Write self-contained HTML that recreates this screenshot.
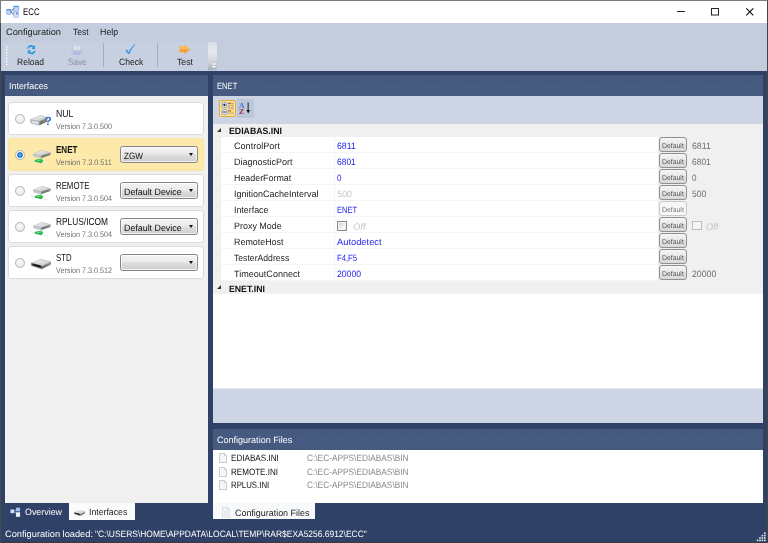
<!DOCTYPE html>
<html>
<head>
<meta charset="utf-8">
<title>ECC</title>
<style>
html,body{margin:0;padding:0;}
body{width:768px;height:543px;overflow:hidden;background:#2f4166;font-family:"Liberation Sans",sans-serif;font-size:9.3px;color:#1a1a1a;position:relative;text-rendering:geometricPrecision;}
.a{position:absolute;white-space:pre;line-height:12px;}
.t{position:absolute;white-space:pre;line-height:12px;height:12px;transform-origin:0 50%;font-size:9.2px;filter:blur(.35px);}
svg.a{filter:blur(.3px);}
#title{left:0;top:0;width:768px;height:23px;background:#fff;}
#menu{left:0;top:23px;width:768px;height:47.6px;background:#c3cddd;}
#tb{left:3px;top:42px;width:206px;height:28.6px;background:#c7d0e0;}
.sep{position:absolute;top:43px;width:1px;height:24px;background:#a4afc4;}
.hdr{position:absolute;height:21px;background-color:#465a80;color:#fff;}
.hdr:after{content:"";position:absolute;left:46px;right:4px;top:9px;height:10px;
 background-image:radial-gradient(circle at 1px 1px,rgba(150,170,205,.13) 0.5px,transparent 0.9px),radial-gradient(circle at 3.5px 3.5px,rgba(150,170,205,.13) 0.5px,transparent 0.9px);background-size:5px 5px;}
.hdr.h2:after{left:28px}.hdr.h3:after{left:83px}
.card{position:absolute;left:8px;width:196.3px;height:33.2px;background:#fff;border:1px solid #dcdcdc;border-radius:3px;box-sizing:border-box;}
.card.sel{background:#fde9a9;border-color:#fbe3a0;}
.radio{position:absolute;left:15.1px;width:7.6px;height:7.6px;border-radius:50%;border:1px solid #b4b4b4;background:radial-gradient(circle at 45% 40%,#fdfdfd 0,#dedede 100%);box-sizing:content-box;}
.nm{font-size:10.2px;color:#111;}
.ver{font-size:8px;color:#6e6e6e;}
.combo{position:absolute;left:120px;width:78px;height:17px;box-sizing:border-box;border:1px solid #858585;border-radius:2.5px;background:linear-gradient(#f4f4f4 0,#ebebeb 45%,#dcdcdc 55%,#cfcfcf 100%);box-shadow:inset 0 0 0 1px rgba(255,255,255,.7);}
.combo .t{left:2.6px;color:#111;}
.combo i{position:absolute;right:3.6px;top:6.1px;width:0;height:0;border-left:2.7px solid transparent;border-right:2.7px solid transparent;border-top:3.6px solid #111;}
.row{position:absolute;left:221px;width:437px;height:15px;background:#fff;}
.row .n{left:13px;color:#222;}
.row .v{left:115.5px;color:#1c1cf0;}
.row b{position:absolute;left:113px;top:0;width:1px;height:15px;background:#f3f3f3;}
.def{position:absolute;left:659.4px;width:27.2px;height:14.5px;box-sizing:border-box;border:1px solid #8f8f8f;border-radius:3px;background:linear-gradient(#f5f5f5,#d9d9d9);}
.def .t{left:1.8px;font-size:6.9px;color:#555;}
.def.dis{border-color:#c8c8c8;background:#f7f7f7;}
.def.dis .t{color:#777;}
.dv{left:692px;color:#6a6a6a;}
.cat{left:229px;font-weight:bold;color:#111;}
.tri{position:absolute;width:0;height:0;border-left:4px solid transparent;border-bottom:4px solid #333;}
.fi{position:absolute;left:219px;width:8px;height:10px;}
.fn{left:230.8px;color:#111;}
.fp{left:306.5px;color:#8a8a8a;}
</style>
</head>
<body>
<!-- title bar -->
<div class="a" id="title"></div>
<svg class="a" style="left:6px;top:5px" width="14" height="13" viewBox="0 0 14 13">
 <rect x=".8" y="4.4" width="4" height="4.8" fill="#bdd5f5" stroke="#5f98ea" stroke-width=".6"/>
 <rect x=".8" y="4.1" width="4" height="1.2" fill="#4f8fe8"/>
 <rect x="7.8" y="1.2" width="4.6" height="5.2" fill="#c3d8f6" stroke="#5f98ea" stroke-width=".6"/>
 <rect x="7.8" y=".9" width="4.6" height="1.2" fill="#4f8fe8"/>
 <rect x="7.8" y="6.8" width="4.6" height="5.4" fill="#d3e2f7" stroke="#93b6ee" stroke-width=".6"/>
 <rect x="10.2" y="7.6" width="1.6" height="1.8" fill="#5c6df0"/>
 <path d="M4.9 6.7L7.9 3.4M4.9 6.7L7.9 9.4" stroke="#46566e" stroke-width="1" fill="none"/>
</svg>
<div class="t" style="transform:scaleX(0.827);top:7.00px;left:22.7px;font-size:9.5px;color:#000;">ECC</div>
<svg class="a" style="left:670px;top:2px" width="96" height="20" viewBox="0 0 96 20">
 <path d="M7 9.5h8" stroke="#222" stroke-width="1"/>
 <rect x="41.5" y="6.5" width="7" height="6.5" fill="none" stroke="#222" stroke-width="1"/>
 <path d="M76.3 6.3l7 7M83.3 6.3l-7 7" stroke="#111" stroke-width="1.15"/>
</svg>

<!-- menu + toolbar -->
<div class="a" id="menu"></div>
<div class="t" style="transform:scaleX(1.006);top:26.00px;left:6px;">Configuration</div>
<div class="t" style="transform:scaleX(0.925);top:26.00px;left:72.7px;">Test</div>
<div class="t" style="transform:scaleX(0.968);top:26.00px;left:100px;">Help</div>
<div class="a" id="tb"></div>
<svg class="a" style="left:5px;top:45px" width="4" height="22" viewBox="0 0 4 22">
 <g fill="#fff"><rect x="1" y="1" width="1.4" height="1.4"/><rect x="1" y="4" width="1.4" height="1.4"/><rect x="1" y="7" width="1.4" height="1.4"/><rect x="1" y="10" width="1.4" height="1.4"/><rect x="1" y="13" width="1.4" height="1.4"/><rect x="1" y="16" width="1.4" height="1.4"/><rect x="1" y="19" width="1.4" height="1.4"/></g>
</svg>
<!-- reload icon -->
<svg class="a" style="left:25.8px;top:42.9px" width="10.8" height="13.2" viewBox="0 0 11 11" preserveAspectRatio="none">
 <path d="M1.2 4.6C1.8 2.4 3.6 1.4 5.6 1.6 6.6 1.7 7.4 2.1 8 2.7L9.2 1.6V5H5.8L7 3.8C6.2 3.1 4.6 2.8 3.6 3.6 3.2 3.9 3 4.2 2.8 4.6Z" fill="#2a96e4"/>
 <path d="M9.8 6.4C9.2 8.6 7.4 9.6 5.4 9.4 4.4 9.3 3.6 8.9 3 8.3L1.8 9.4V6H5.2L4 7.2C4.8 7.9 6.4 8.2 7.4 7.4 7.8 7.1 8 6.8 8.2 6.4Z" fill="#2a96e4"/>
</svg>
<div class="t" style="transform:scaleX(0.927);top:56.00px;left:17.3px;">Reload</div>
<!-- save icon (disabled) -->
<svg class="a" style="left:70.6px;top:44.6px" width="12" height="11" viewBox="0 0 12 11">
 <rect x=".6" y=".6" width="10.6" height="9.4" fill="#bcc3d9" opacity=".75"/>
 <rect x="2.2" y=".6" width="7.4" height="4.4" fill="#d9deea"/>
 <rect x="2.4" y="6" width="7" height="4" fill="#c6cbe2"/>
 <path d="M3.4 6.4v3.4M5.2 6.4v3.4M7 6.4v3.4M8.8 6.4v3.4" stroke="#9b9bd2" stroke-width=".7"/>
</svg>
<div class="t" style="transform:scaleX(0.892);top:56.00px;left:67.8px;color:#8b8f99;">Save</div>
<div class="sep" style="left:103px"></div>
<!-- check icon -->
<svg class="a" style="left:124px;top:43px" width="12" height="12" viewBox="0 0 12 12">
 <path d="M1.2 7.4L2.8 6.6L4.7 8.9C6.2 5.8 8.2 3.2 11 0.9L11.5 1.4C9 4 7 7.2 5.3 11H4.2Z" fill="#3a98e8"/>
</svg>
<div class="t" style="transform:scaleX(0.933);top:56.00px;left:119px;">Check</div>
<div class="sep" style="left:157px"></div>
<!-- test icon (arrow) -->
<svg class="a" style="left:178px;top:44px" width="13" height="11" viewBox="0 0 13 11">
 <path d="M.8 2.6L2.4 2.2H6.6V.4L12 5.2L6.6 10.2V8.2H2.4L.8 7.8L2 5.2Z" fill="#f3a03c"/>
 <path d="M.8 2.6L2.4 2.2H6.6V.4L12 5.2H2Z" fill="#f9bb62"/>
</svg>
<div class="t" style="transform:scaleX(0.949);top:56.00px;left:176.7px;">Test</div>
<!-- overflow -->
<div class="a" style="left:208.3px;top:41.5px;width:8.4px;height:28.3px;border-radius:0 3px 3px 0;background:linear-gradient(#d9dfe8,#e6e8ed 35%,#d0d3da 70%,#a9aebb);"></div>
<svg class="a" style="left:211px;top:63px" width="6" height="6" viewBox="0 0 6 6"><path d="M1 1h4" stroke="#fff" stroke-width="1"/><path d="M1 3h4L3 5Z" fill="#fff"/></svg>

<!-- left panel -->
<div class="hdr" style="left:5px;top:75px;width:203px;"></div>

<div class="t" style="transform:scaleX(0.967);top:80.00px;left:9.3px;color:#fff;">Interfaces</div>
<div class="a" style="left:5px;top:96px;width:203px;height:407px;background:#f0f0f0"></div>

<!-- cards -->
<div class="card" style="top:102.3px"></div>
<div class="card sel" style="top:138.3px"></div>
<div class="card" style="top:174.3px"></div>
<div class="card" style="top:210.3px"></div>
<div class="card" style="top:246.3px"></div>

<div class="radio" style="top:114.2px"></div>
<div class="radio" style="top:150.2px;border-color:#b4b4b4;background:radial-gradient(circle at 50% 50%,#62c4f8 0,#2a8ee0 28%,#17589e 40%,#9fb4c8 50%,#f4f4f4 60%,#e4e4e4 100%)"></div>
<div class="radio" style="top:186.2px"></div>
<div class="radio" style="top:222.2px"></div>
<div class="radio" style="top:258px"></div>

<svg width="0" height="0" style="position:absolute">
 <defs>
  <linearGradient id="dg" x1="0" y1="0" x2="1" y2="1"><stop offset="0" stop-color="#f6f6f6"/><stop offset="1" stop-color="#c4c4c4"/></linearGradient>
  <linearGradient id="ds" x1="0" y1="0" x2="0" y2="1"><stop offset="0" stop-color="#9c9c9c"/><stop offset="1" stop-color="#5e5e5e"/></linearGradient>
  <g id="drvA">
   <path d="M.3 4.7L10.6 .3L17.5 2.5L9.4 6.25Z" fill="url(#dg)" stroke="#b4b4b4" stroke-width=".5"/>
   <path d="M.3 4.7L9.4 6.25V10.3L.7 8.1Z" fill="#b9c2d0" stroke="#a0a6b0" stroke-width=".5"/>
   <path d="M1.6 5.9L8.2 7.1V8.9L1.8 7.4Z" fill="#dfe6f0"/>
   <path d="M9.4 6.25L17.5 2.5V6.4L9.4 10.3Z" fill="url(#ds)"/>
   <rect x="10.3" y="7.3" width="1" height="1.3" fill="#3fae3f"/><rect x="11.6" y="6.8" width="1" height="1.3" fill="#c8501e"/>
  </g>
  <g id="drvB">
   <path d="M-2.2 10L1.6 10.6M9.7 13.1L14.7 14" stroke="#e8e8e8" stroke-width="1" fill="none"/>
   <path d="M1.6 10L8 8.6L10.3 10.5L8.5 13.2L2 11.8Z" fill="#27b34a"/>
   <path d="M3 10.2L7.8 9.2L9 10.3L4.6 11.2Z" fill="#63dc7f"/>
   <path d="M.3 4.1L9 .3L17.5 2.5L8.4 5.6Z" fill="url(#dg)" stroke="#b4b4b4" stroke-width=".5"/>
   <path d="M.3 4.1L8.4 5.6V8L1 6.2Z" fill="#c3c8d2" stroke="#a8acb4" stroke-width=".4"/>
   <path d="M8.4 5.6L17.5 2.5V5L8.4 8Z" fill="url(#ds)"/>
   <rect x="9.2" y="6.1" width=".9" height="1.1" fill="#3fae3f"/>
  </g>
  <g id="drvC">
   <path d="M.3 4.1L10 .3L20 2.8L11.2 6.9Z" fill="url(#dg)" stroke="#b0b0b0" stroke-width=".5"/>
   <path d="M.3 4.1L11.2 6.9V10L.5 6.6Z" fill="#3a3a3a" stroke="#8c8c8c" stroke-width=".6"/>
   <path d="M2.6 5.6L9.4 7.4" stroke="#0a0a0a" stroke-width="1.3"/>
   <path d="M11.2 6.9L20 2.8V5.6L11.2 10Z" fill="url(#ds)"/>
  </g>
 </defs>
</svg>
<svg class="a" style="left:30px;top:115px;overflow:visible" width="22" height="12" viewBox="0 0 22 12"><use href="#drvA"/><text x="14.6" y="10.4" font-family="Liberation Sans,sans-serif" font-weight="bold" font-size="12" fill="#4068d4">?</text></svg>
<svg class="a" style="left:32.8px;top:150px;overflow:visible" width="18" height="15" viewBox="0 0 18 15"><use href="#drvB"/></svg>
<svg class="a" style="left:32.8px;top:186px;overflow:visible" width="18" height="15" viewBox="0 0 18 15"><use href="#drvB"/></svg>
<svg class="a" style="left:32.8px;top:222px;overflow:visible" width="18" height="15" viewBox="0 0 18 15"><use href="#drvB"/></svg>
<svg class="a" style="left:30.6px;top:259.2px;overflow:visible" width="21" height="11" viewBox="0 0 21 11"><use href="#drvC"/></svg>

<div class="t nm" style="transform:scaleX(0.858);top:109.00px;left:55.9px;">NUL</div>
<div class="t ver" style="transform:scaleX(0.898);top:121.00px;left:55.9px;">Version 7.3.0.500</div>
<div class="t nm" style="transform:scaleX(0.791);top:145.00px;left:55.9px;font-weight:bold;">ENET</div>
<div class="t ver" style="transform:scaleX(0.906);top:157.00px;left:55.9px;">Version 7.3.0.511</div>
<div class="t nm" style="transform:scaleX(0.768);top:181.00px;left:55.9px;">REMOTE</div>
<div class="t ver" style="transform:scaleX(0.898);top:193.00px;left:55.9px;">Version 7.3.0.504</div>
<div class="t nm" style="transform:scaleX(0.819);top:217.00px;left:55.9px;">RPLUS/ICOM</div>
<div class="t ver" style="transform:scaleX(0.898);top:229.00px;left:55.9px;">Version 7.3.0.504</div>
<div class="t nm" style="transform:scaleX(0.766);top:253.00px;left:55.9px;">STD</div>
<div class="t ver" style="transform:scaleX(0.898);top:265.00px;left:55.9px;">Version 7.3.0.512</div>

<div class="combo" style="top:146.3px"><div class="t" style="transform:scaleX(0.886);top:2.70px;">ZGW</div><i></i></div>
<div class="combo" style="top:182.3px"><div class="t" style="transform:scaleX(0.964);top:2.70px;">Default Device</div><i></i></div>
<div class="combo" style="top:218.3px"><div class="t" style="transform:scaleX(0.964);top:2.70px;">Default Device</div><i></i></div>
<div class="combo" style="top:254.3px"><i></i></div>

<!-- left tabs -->
<svg class="a" style="left:9.5px;top:507px" width="11" height="10.5" viewBox="0 0 12 11">
 <rect x="0.5" y="2.5" width="4" height="4" fill="#cfe0f8"/><rect x="6.5" y="0.5" width="4.5" height="4" fill="#9cc4f4"/><rect x="6.5" y="5.5" width="4.5" height="5" fill="#e8f0fc"/>
 <path d="M4.5 4.5L6.5 3M4.5 4.5L6.5 7" stroke="#b8c6e0" stroke-width=".8"/>
</svg>
<div class="t" style="transform:scaleX(0.966);top:506.00px;left:25px;color:#fff;">Overview</div>
<div class="a" style="left:68.7px;top:503px;width:66.3px;height:16.5px;background:#fafbfc"></div>
<svg class="a" style="left:73.6px;top:510.2px" width="11.6" height="6" viewBox="0 0 20.4 10.3" preserveAspectRatio="none"><use href="#drvC"/>
</svg>
<div class="t" style="transform:scaleX(0.949);top:506.00px;left:89.2px;color:#222;">Interfaces</div>

<!-- right top panel -->
<div class="hdr h2" style="left:212.6px;top:75px;width:550px;"></div>

<div class="t" style="transform:scaleX(0.828);top:80.00px;left:217px;color:#fff;">ENET</div>
<div class="a" style="left:212.6px;top:96px;width:550px;height:28px;background:#cdd5e4"></div>
<div class="a" style="left:237.4px;top:99px;width:16.3px;height:19px;background:#bcc7d9"></div>
<div class="a" style="left:219px;top:100px;width:17.2px;height:17px;box-sizing:border-box;border:1px solid #e6a83c;border-radius:2px;background:#fbd680;box-shadow:inset 0 0 0 1px #fde4a4"></div>
<svg class="a" style="left:219px;top:100px" width="18" height="17" viewBox="0 0 18 17">
 <g fill="#eaf3fc" stroke="#5f94d0" stroke-width=".8"><rect x="3.2" y="2.4" width="4.4" height="5" rx="1.2"/><rect x="3.2" y="9.5" width="4.4" height="5" rx="1.2"/></g>
 <path d="M4.2 4.9h2.4M5.4 3.7v2.4M4.2 12h2.4" stroke="#111" stroke-width="1"/>
 <path d="M9.2 3.4h2.6M9.2 11h2.6" stroke="#7a3a2a" stroke-width=".9"/>
 <g stroke="#8aa0b8" stroke-width=".8"><path d="M9.2 5.4h2.2M12.2 5.4h2.4M9.2 7.2h2.2M12.2 7.2h2.4M9.2 8.8h2.2M12.2 8.8h2.4M9.2 13h2.2M12.2 13h2.4M12.2 3.4h2.4"/></g>
</svg>
<svg class="a" style="left:238px;top:100px" width="15" height="17" viewBox="0 0 15 17">
 <text x="0.9" y="7.6" font-family="Liberation Serif,serif" font-weight="bold" font-size="7.6" fill="#3a74d8">A</text>
 <text x="1.1" y="13.9" font-family="Liberation Serif,serif" font-weight="bold" font-size="7.6" fill="#a82840">Z</text>
 <path d="M10.2 2.4v8.6" stroke="#3c4658" stroke-width="1.3"/><path d="M8.4 10h3.6L10.2 13.6Z" fill="#111"/>
</svg>
<!-- grid -->
<div class="a" style="left:212.6px;top:124px;width:550px;height:264px;background:#fff"></div>
<div class="a" style="left:212.6px;top:124px;width:550px;height:157px;background:#f0f0f0"></div>
<div class="a" style="left:221px;top:137px;width:437px;height:144px;background:#f5f5f5"></div>
<div class="a" style="left:212.6px;top:281px;width:550px;height:13px;background:#f0f0f0"></div>
<div class="tri" style="left:217px;top:128px"></div>
<div class="t cat" style="transform:scaleX(0.952);top:125.00px;">EDIABAS.INI</div>
<div class="tri" style="left:217px;top:285px"></div>
<div class="t cat" style="transform:scaleX(0.950);top:283.00px;">ENET.INI</div>

<div class="row" style="top:137px"><div class="t n" style="transform:scaleX(0.988);top:3.00px;">ControlPort</div><b></b><div class="t v" style="transform:scaleX(0.951);top:3.00px;">6811</div></div>
<div class="row" style="top:153px"><div class="t n" style="transform:scaleX(0.981);top:3.00px;">DiagnosticPort</div><b></b><div class="t v" style="transform:scaleX(0.919);top:3.00px;">6801</div></div>
<div class="row" style="top:169px"><div class="t n" style="transform:scaleX(0.966);top:3.00px;">HeaderFormat</div><b></b><div class="t v" style="transform:scaleX(0.878);top:3.00px;">0</div></div>
<div class="row" style="top:185px"><div class="t n" style="transform:scaleX(0.980);top:3.00px;">IgnitionCacheInterval</div><b></b><div class="t v" style="transform:scaleX(0.958);top:3.00px;color:#c4c4c4;font-style:italic">500</div></div>
<div class="row" style="top:201px"><div class="t n" style="transform:scaleX(0.962);top:3.00px;">Interface</div><b></b><div class="t v" style="transform:scaleX(0.820);top:3.00px;">ENET</div></div>
<div class="row" style="top:217px"><div class="t n" style="transform:scaleX(0.973);top:3.00px;">Proxy Mode</div><b></b>
 <div class="a" style="left:116px;top:4.2px;width:10px;height:9.5px;box-sizing:border-box;border:1px solid #8a8a8a;background:linear-gradient(135deg,#cfcfcf,#fff 85%);box-shadow:inset 0 0 0 1px #f2f2f2"></div>
 <div class="t v" style="transform:scaleX(0.971);top:5.00px;left:132.2px;color:#c8c8c8;font-style:italic;font-size:9.8px">Off</div></div>
<div class="row" style="top:233px"><div class="t n" style="transform:scaleX(0.969);top:3.00px;">RemoteHost</div><b></b><div class="t v" style="transform:scaleX(1.015);top:3.00px;">Autodetect</div></div>
<div class="row" style="top:249px"><div class="t n" style="transform:scaleX(0.940);top:3.00px;">TesterAddress</div><b></b><div class="t v" style="transform:scaleX(0.838);top:3.00px;">F4,F5</div></div>
<div class="row" style="top:265px"><div class="t n" style="transform:scaleX(0.985);top:3.00px;">TimeoutConnect</div><b></b><div class="t v" style="transform:scaleX(0.939);top:3.00px;">20000</div></div>

<div class="def" style="top:137.4px"><div class="t" style="transform:scaleX(0.998);top:2.61px;">Default</div></div><div class="t dv" style="transform:scaleX(0.951);top:140.00px;">6811</div>
<div class="def" style="top:153.4px"><div class="t" style="transform:scaleX(0.998);top:2.61px;">Default</div></div><div class="t dv" style="transform:scaleX(0.919);top:156.00px;">6801</div>
<div class="def" style="top:169.4px"><div class="t" style="transform:scaleX(0.998);top:2.61px;">Default</div></div><div class="t dv" style="transform:scaleX(0.878);top:172.00px;">0</div>
<div class="def" style="top:185.4px"><div class="t" style="transform:scaleX(0.998);top:2.61px;">Default</div></div><div class="t dv" style="transform:scaleX(0.932);top:188.00px;">500</div>
<div class="def dis" style="top:201.4px"><div class="t" style="transform:scaleX(0.998);top:2.61px;">Default</div></div>
<div class="def" style="top:217.4px"><div class="t" style="transform:scaleX(0.998);top:2.61px;">Default</div></div>
<div class="a" style="left:692.1px;top:221.1px;width:9.8px;height:9.4px;box-sizing:border-box;border:1px solid #bdbdbd;background:#f6f6f6"></div>
<div class="t dv" style="transform:scaleX(0.933);top:222.00px;left:705.9px;color:#c8c8c8;font-style:italic;font-size:9.8px">Off</div>
<div class="def" style="top:233.4px"><div class="t" style="transform:scaleX(0.998);top:2.61px;">Default</div></div>
<div class="def" style="top:249.4px"><div class="t" style="transform:scaleX(0.998);top:2.61px;">Default</div></div>
<div class="def" style="top:265.4px"><div class="t" style="transform:scaleX(0.998);top:2.61px;">Default</div></div><div class="t dv" style="transform:scaleX(0.951);top:268.00px;">20000</div>

<div class="a" style="left:212.6px;top:388px;width:550px;height:34.6px;background:#cdd5e4"></div>
<div class="a" style="left:212.6px;top:388px;width:550px;height:1px;background:#e2e7f0"></div>

<!-- right bottom panel -->
<div class="hdr h3" style="left:212.6px;top:428.8px;width:550px;"></div>

<div class="t" style="transform:scaleX(0.982);top:434.00px;left:216.6px;color:#fff;">Configuration Files</div>
<div class="a" style="left:212.6px;top:450px;width:550px;height:53px;background:#fff"></div>
<svg width="0" height="0" style="position:absolute"><defs><g id="doc"><path d="M.5 .5H5.4L7.5 2.6V9.5H.5Z" fill="#f4f6f8" stroke="#b9c0c8" stroke-width=".8"/><path d="M5.4 .5V2.6H7.5" fill="#dfe4ea" stroke="#b9c0c8" stroke-width=".6"/></g></defs></svg>
<svg class="fi" style="top:453px" viewBox="0 0 8 10"><use href="#doc"/></svg>
<svg class="fi" style="top:466.5px" viewBox="0 0 8 10"><use href="#doc"/></svg>
<svg class="fi" style="top:480px" viewBox="0 0 8 10"><use href="#doc"/></svg>
<div class="t fn" style="transform:scaleX(0.883);top:452.00px;">EDIABAS.INI</div><div class="t fp" style="transform:scaleX(0.904);top:452.00px;">C:\EC-APPS\EDIABAS\BIN</div>
<div class="t fn" style="transform:scaleX(0.877);top:466.00px;">REMOTE.INI</div><div class="t fp" style="transform:scaleX(0.904);top:466.00px;">C:\EC-APPS\EDIABAS\BIN</div>
<div class="t fn" style="transform:scaleX(0.850);top:479.00px;">RPLUS.INI</div><div class="t fp" style="transform:scaleX(0.904);top:479.00px;">C:\EC-APPS\EDIABAS\BIN</div>
<div class="a" style="left:212.6px;top:503px;width:102.5px;height:16.4px;background:#f7f9fb"></div>
<svg class="a" style="left:221.5px;top:507px;opacity:.6" width="8.5" height="10.5" viewBox="0 0 8 10"><use href="#doc"/><path d="M2 4h4M2 5.6h4M2 7.2h4" stroke="#a8c0e0" stroke-width=".6"/></svg>
<div class="t" style="transform:scaleX(0.971);top:507.00px;left:234.9px;color:#222;">Configuration Files</div>

<!-- status bar -->
<div class="t" style="transform:scaleX(1.007);top:528.00px;left:5px;color:#fff;">Configuration loaded:</div><div class="t" style="transform:scaleX(0.919);top:528.00px;left:95px;color:#fff;">"C:\USERS\HOME\APPDATA\LOCAL\TEMP\RAR$EXA5256.6912\ECC"</div>
<svg class="a" style="left:756px;top:531px" width="11" height="11" viewBox="0 0 11 11"><g fill="#e6eaf2"><rect x="8" y="1.4" width="1.6" height="1.6"/><rect x="5.6" y="3.8" width="1.6" height="1.6"/><rect x="8" y="3.8" width="1.6" height="1.6"/><rect x="3.2" y="6.2" width="1.6" height="1.6"/><rect x="5.6" y="6.2" width="1.6" height="1.6"/><rect x="8" y="6.2" width="1.6" height="1.6"/><rect x=".8" y="8.6" width="1.6" height="1.6"/><rect x="3.2" y="8.6" width="1.6" height="1.6"/><rect x="5.6" y="8.6" width="1.6" height="1.6"/><rect x="8" y="8.6" width="1.6" height="1.6"/></g></svg>

<!-- window border -->
<div class="a" style="left:0;top:0;width:768px;height:543px;box-sizing:border-box;border:1px solid #7d7d7d;border-bottom-color:#3a3a3a;border-right-color:#444;pointer-events:none"></div>
<div class="a" style="left:0;top:23px;width:1px;height:520px;background:#4a4a4a"></div>
</body>
</html>
